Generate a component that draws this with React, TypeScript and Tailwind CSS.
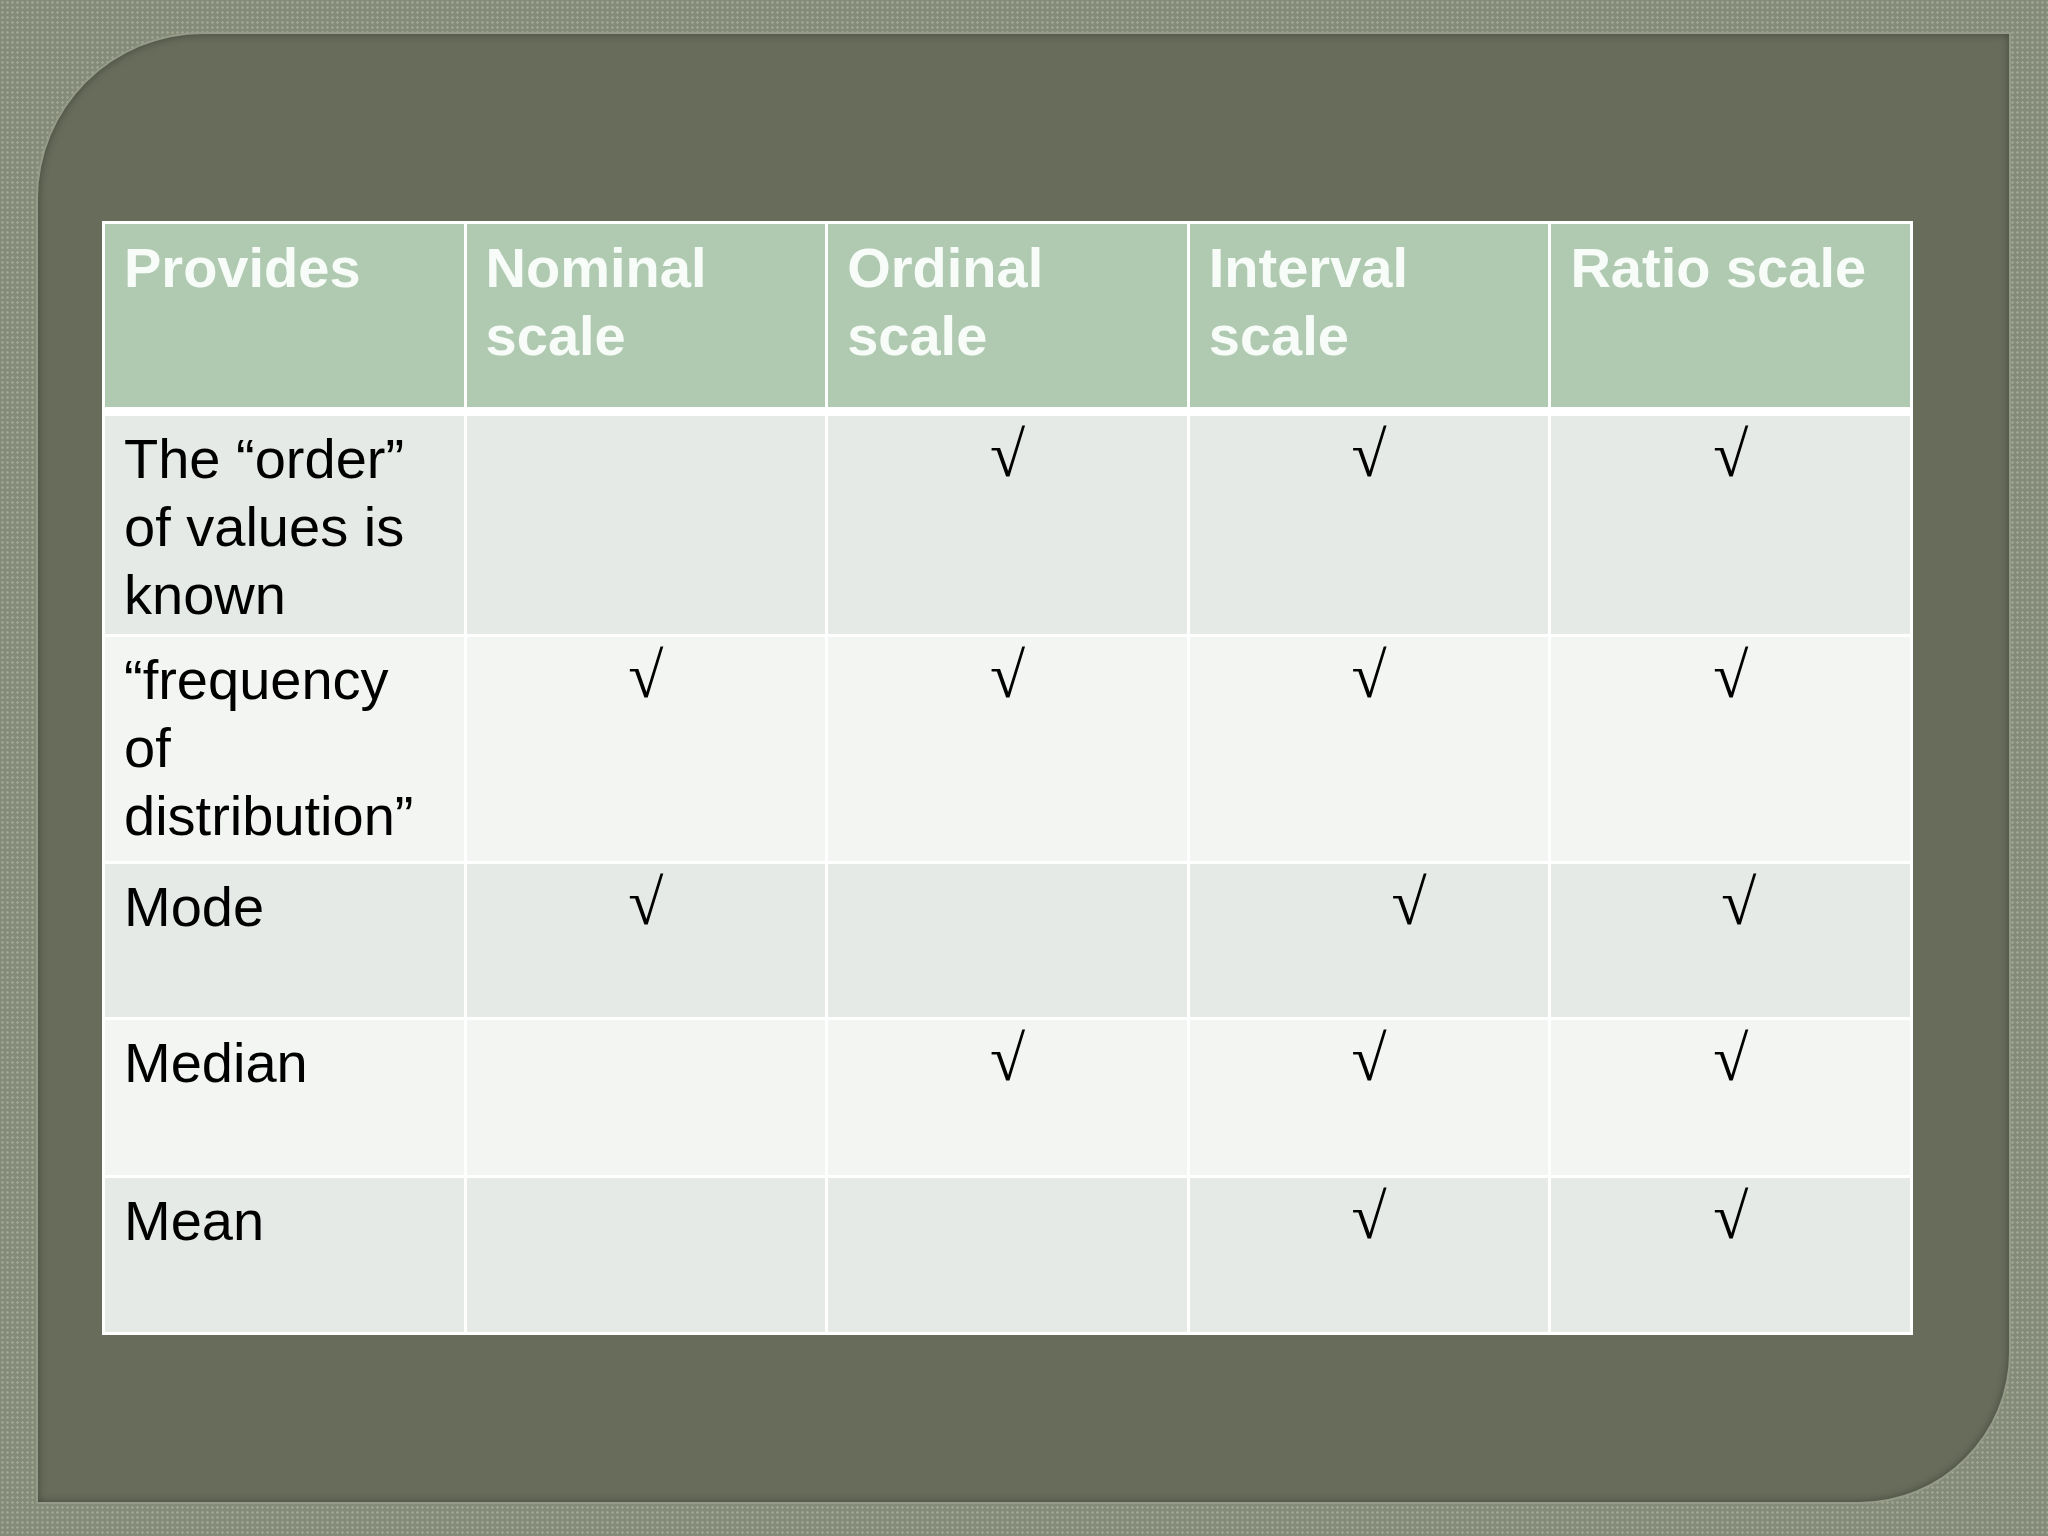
const headers = ["Provides", "Nominal scale", "Ordinal scale", "Interval scale", "Ratio scale"]

// each row: label, then marks for nominal / ordinal / interval / ratio
const rows = [
  { label: "The “order” of values is known", marks: [false, true, true, true], h: "h-[218px]", bg: "bg-[#e5eae6]" },
  { label: "“frequency of distribution”", marks: [true, true, true, true], h: "h-[224px]", bg: "bg-[#f2f5f2]" },
  { label: "Mode", marks: [true, false, true, true], h: "h-[153px]", bg: "bg-[#e5eae6]", shift: ["", "", "pl-[80px]", "pl-[16px]"] },
  { label: "Median", marks: [false, true, true, true], h: "h-[155px]", bg: "bg-[#f2f5f2]" },
  { label: "Mean", marks: [false, false, true, true], h: "h-[154px]", bg: "bg-[#e5eae6]" },
]

export default function App() {
  return (
    <div className="w-[2048px] h-[1536px] bg-[#858b79] bg-[radial-gradient(circle,rgba(190,196,176,0.45)_1px,transparent_1.6px)] bg-[length:5px_5px] pt-[34px] pl-[38px] pr-[39px] pb-[34px] font-['Liberation_Sans',Arial,sans-serif]">
      <div className="h-full w-full rounded-tl-[165px] rounded-br-[150px] bg-[#676c5b] ring-2 ring-[#959b88] shadow-[inset_0_0_8px_rgba(0,0,0,0.35)] pl-[64px] pt-[187px]">
        <div className="w-[1811px] bg-white p-[3px] flex flex-col">
          {/* header */}
          <div className="grid grid-cols-5 gap-[3px] h-[183px]">
            {headers.map((h) => (
              <div key={h} className="bg-[#b0cab2] pl-[19px] pt-[10px] pr-[10px] text-[56px] leading-[68px] font-bold text-[#f8fcf8]">
                {h}
              </div>
            ))}
          </div>
          <div className="h-[9px]" />
          <div className="flex flex-col gap-[3px]">
            {rows.map((r) => (
              <div key={r.label} className={`grid grid-cols-5 gap-[3px] ${r.h}`}>
                <div className={`${r.bg} pl-[19px] pt-[9px] pr-[24px] text-[56px] leading-[68px] text-black`}>
                  {r.label}
                </div>
                {r.marks.map((m, i) => (
                  <div
                    key={i}
                    className={`${r.bg} pt-[5px] text-center text-[64px] leading-[68px] text-black font-['Liberation_Serif','Times_New_Roman',serif] ${r.shift ? r.shift[i] : ""}`}
                  >
                    {m ? "√" : ""}
                  </div>
                ))}
              </div>
            ))}
          </div>
        </div>
      </div>
    </div>
  )
}
